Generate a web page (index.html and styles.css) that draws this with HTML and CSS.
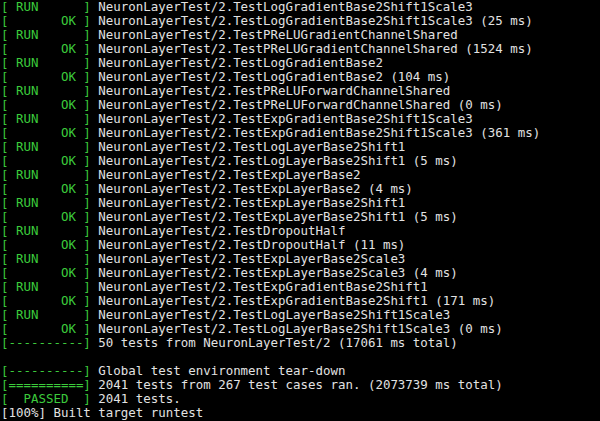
FILE: index.html
```html
<!DOCTYPE html>
<html lang="en">
<head>
    <meta charset="UTF-8">
    <title>runtest</title>
    <link rel="stylesheet" href="styles.css">
</head>
<body>
<pre class="term"><span class="g">[ RUN      ]</span> NeuronLayerTest/2.TestLogGradientBase2Shift1Scale3
<span class="g">[       OK ]</span> NeuronLayerTest/2.TestLogGradientBase2Shift1Scale3 (25 ms)
<span class="g">[ RUN      ]</span> NeuronLayerTest/2.TestPReLUGradientChannelShared
<span class="g">[       OK ]</span> NeuronLayerTest/2.TestPReLUGradientChannelShared (1524 ms)
<span class="g">[ RUN      ]</span> NeuronLayerTest/2.TestLogGradientBase2
<span class="g">[       OK ]</span> NeuronLayerTest/2.TestLogGradientBase2 (104 ms)
<span class="g">[ RUN      ]</span> NeuronLayerTest/2.TestPReLUForwardChannelShared
<span class="g">[       OK ]</span> NeuronLayerTest/2.TestPReLUForwardChannelShared (0 ms)
<span class="g">[ RUN      ]</span> NeuronLayerTest/2.TestExpGradientBase2Shift1Scale3
<span class="g">[       OK ]</span> NeuronLayerTest/2.TestExpGradientBase2Shift1Scale3 (361 ms)
<span class="g">[ RUN      ]</span> NeuronLayerTest/2.TestLogLayerBase2Shift1
<span class="g">[       OK ]</span> NeuronLayerTest/2.TestLogLayerBase2Shift1 (5 ms)
<span class="g">[ RUN      ]</span> NeuronLayerTest/2.TestExpLayerBase2
<span class="g">[       OK ]</span> NeuronLayerTest/2.TestExpLayerBase2 (4 ms)
<span class="g">[ RUN      ]</span> NeuronLayerTest/2.TestExpLayerBase2Shift1
<span class="g">[       OK ]</span> NeuronLayerTest/2.TestExpLayerBase2Shift1 (5 ms)
<span class="g">[ RUN      ]</span> NeuronLayerTest/2.TestDropoutHalf
<span class="g">[       OK ]</span> NeuronLayerTest/2.TestDropoutHalf (11 ms)
<span class="g">[ RUN      ]</span> NeuronLayerTest/2.TestExpLayerBase2Scale3
<span class="g">[       OK ]</span> NeuronLayerTest/2.TestExpLayerBase2Scale3 (4 ms)
<span class="g">[ RUN      ]</span> NeuronLayerTest/2.TestExpGradientBase2Shift1
<span class="g">[       OK ]</span> NeuronLayerTest/2.TestExpGradientBase2Shift1 (171 ms)
<span class="g">[ RUN      ]</span> NeuronLayerTest/2.TestLogLayerBase2Shift1Scale3
<span class="g">[       OK ]</span> NeuronLayerTest/2.TestLogLayerBase2Shift1Scale3 (0 ms)
<span class="g">[----------]</span> 50 tests from NeuronLayerTest/2 (17061 ms total)

<span class="g">[----------]</span> Global test environment tear-down
<span class="g">[==========]</span> 2041 tests from 267 test cases ran. (2073739 ms total)
<span class="g">[  PASSED  ]</span> 2041 tests.
[100%] Built target runtest</pre>
</body>
</html>
```

FILE: styles.css
```css
*{
    margin: 0;
    padding: 0;
}
body{
    background-color: #000;
    width: 600px;
    height: 421px;
    overflow: hidden;
}
.term{
    font-family: "DejaVu Sans Mono", monospace;
    font-size: 12.45px;
    line-height: 14px;
    color: #e2e2e2;
    padding: 0 0 0 1px;
}
.term .g{
    color: #3ccb3c;
}
```
